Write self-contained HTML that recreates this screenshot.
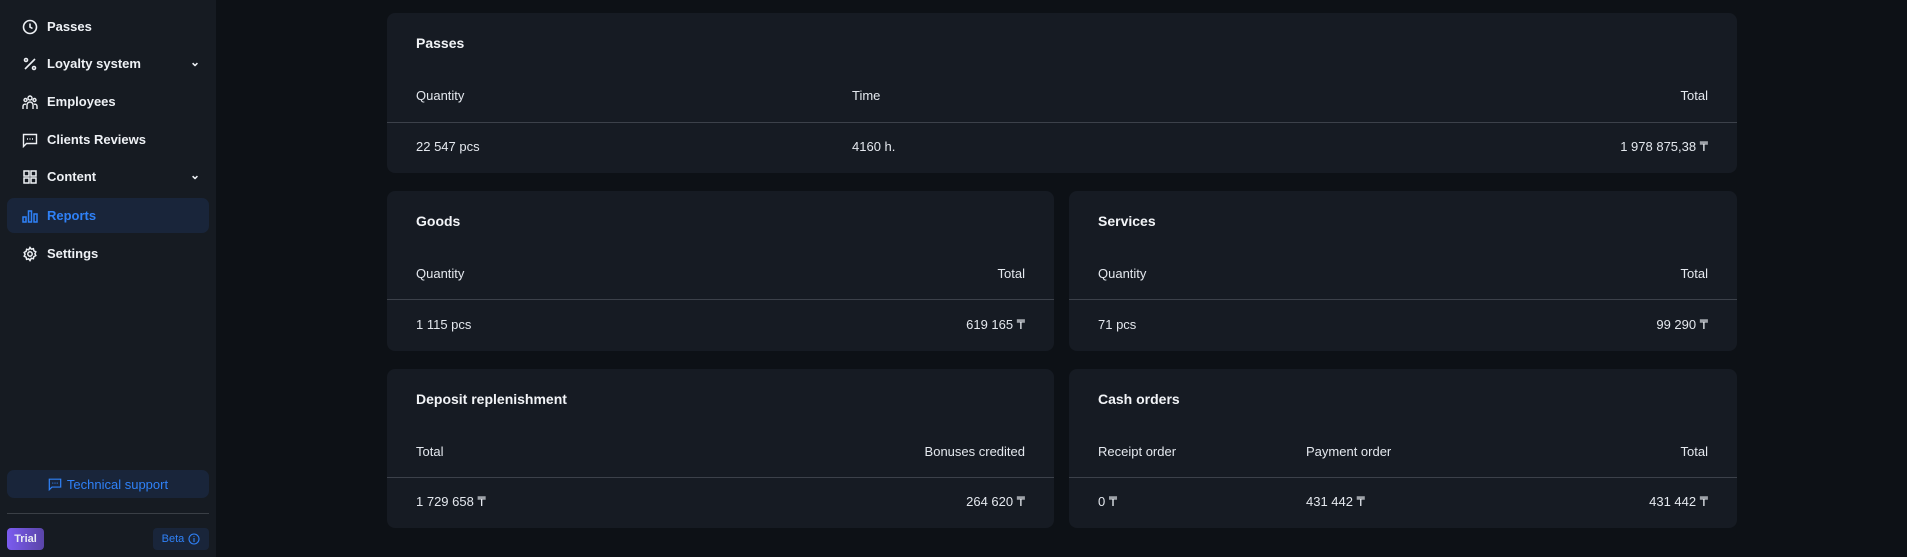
<!DOCTYPE html>
<html><head><meta charset="utf-8"><style>
*{box-sizing:border-box;margin:0;padding:0}
body{width:1907px;height:557px;background:#0d1116;font-family:"Liberation Sans",sans-serif;color:#e9edf2;position:relative;overflow:hidden}
.sb{position:absolute;left:0;top:0;width:216px;height:557px;background:#161b22}
.it{position:absolute;left:7px;width:202px;height:35px;display:flex;align-items:center;font-size:13px;font-weight:bold;color:#eef1f5}
.it svg{position:absolute;left:15px;width:16px;height:16px}
.it span{position:absolute;left:40px}
.it .ch{position:absolute;left:183px;top:9px;font-size:12px}
.act{background:#19253a;border-radius:7px;color:#2f81f7}
.ts{position:absolute;left:7px;top:470px;width:202px;height:28px;background:#19253a;border-radius:7px;color:#2f81f7;font-size:13px;display:flex;align-items:center;justify-content:center;gap:5px}
.hr{position:absolute;left:7px;top:513px;width:202px;height:1px;background:#3a3f46}
.trial{position:absolute;left:7px;top:528px;width:37px;height:22px;border-radius:4px;background:linear-gradient(90deg,#7b5cf0,#5a45a8);font-size:11px;font-weight:bold;display:flex;align-items:center;justify-content:center}
.beta{position:absolute;left:153px;top:528px;width:56px;height:22px;border-radius:4px;background:#19253a;color:#2f81f7;font-size:11px;display:flex;align-items:center;justify-content:center;gap:4px}
.card{position:absolute;background:#161b23;border-radius:8px}
.card h3{position:absolute;left:29px;top:22px;font-size:14px;font-weight:bold;color:#f2f4f7}
.row{position:absolute;left:0;right:0;height:20px;font-size:13px;color:#e4e8ee}
.row div{position:absolute;top:0}
.r{right:29px}
.div{position:absolute;left:0;right:0;height:1px;background:#3c414a}
</style></head><body>
<div class="sb">
<div class="it" style="top:9px"><svg viewBox="0 0 16 16" fill="none" stroke="#eef1f5" stroke-width="1.6"><circle cx="8" cy="8" r="6.5"/><path d="M8 4.5V8l2.5 1.5"/></svg><span>Passes</span></div>
<div class="it" style="top:46px"><svg viewBox="0 0 16 16" fill="none" stroke="#eef1f5" stroke-width="1.6"><path d="M3 13L13 3"/><circle cx="4" cy="4" r="1.5"/><circle cx="12" cy="12" r="1.5"/></svg><span>Loyalty system</span><b class="ch">⌄</b></div>
<div class="it" style="top:84px"><svg viewBox="0 0 16 16" fill="none" stroke="#eef1f5" stroke-width="1.4"><circle cx="8" cy="4" r="2"/><circle cx="3.5" cy="6" r="1.5"/><circle cx="12.5" cy="6" r="1.5"/><path d="M5 15v-4a3 3 0 016 0v4M1 15v-3a2 2 0 013-1.5M15 15v-3a2 2 0 00-3-1.5"/></svg><span>Employees</span></div>
<div class="it" style="top:122px"><svg viewBox="0 0 16 16" fill="none" stroke="#eef1f5" stroke-width="1.4"><path d="M1.5 2.5h13v9h-10l-3 3z"/><path d="M5 7h1M7.5 7h1M10 7h1"/></svg><span>Clients Reviews</span></div>
<div class="it" style="top:159px"><svg viewBox="0 0 16 16" fill="none" stroke="#eef1f5" stroke-width="1.5"><rect x="2" y="2" width="5" height="5"/><rect x="9" y="2" width="5" height="5"/><rect x="2" y="9" width="5" height="5"/><rect x="9" y="9" width="5" height="5"/></svg><span>Content</span><b class="ch">⌄</b></div>
<div class="it act" style="top:198px"><svg viewBox="0 0 16 16" fill="none" stroke="#2f81f7" stroke-width="1.5"><rect x="1" y="9" width="3" height="5"/><rect x="6.5" y="3" width="3" height="11"/><rect x="12" y="6" width="3" height="8"/></svg><span>Reports</span></div>
<div class="it" style="top:236px"><svg viewBox="0 0 16 16" fill="none" stroke="#eef1f5" stroke-width="1.5"><circle cx="8" cy="8" r="2.2"/><path d="M8 1.5l1.3 1.7 2.1-.5.5 2.1 1.9 1-.9 1.9.9 1.9-1.9 1-.5 2.1-2.1-.5L8 14.5l-1.3-1.7-2.1.5-.5-2.1-1.9-1 .9-1.9-.9-1.9 1.9-1 .5-2.1 2.1.5z"/></svg><span>Settings</span></div>
<div class="ts"><svg width="14" height="14" viewBox="0 0 16 16" fill="none" stroke="#2f81f7" stroke-width="1.4"><path d="M1.5 2.5h13v9h-10l-3 3z"/><path d="M5 7h1M7.5 7h1M10 7h1"/></svg>Technical support</div>
<div class="hr"></div>
<div class="trial">Trial</div>
<div class="beta">Beta <svg width="12" height="12" viewBox="0 0 12 12" fill="none" stroke="#2f81f7" stroke-width="1.1"><circle cx="6" cy="6" r="5"/><path d="M6 5v4M6 3v.8"/></svg></div>
</div>

<div class="card" style="left:387px;top:13px;width:1350px;height:160px">
<h3>Passes</h3>
<div class="row" style="top:75px"><div style="left:29px">Quantity</div><div style="left:465px">Time</div><div class="r">Total</div></div>
<div class="div" style="top:109px"></div>
<div class="row" style="top:126px"><div style="left:29px">22 547 pcs</div><div style="left:465px">4160 h.</div><div class="r">1 978 875,38 ₸</div></div>
</div>

<div class="card" style="left:387px;top:191px;width:667px;height:160px">
<h3>Goods</h3>
<div class="row" style="top:75px"><div style="left:29px">Quantity</div><div class="r">Total</div></div>
<div class="div" style="top:108px"></div>
<div class="row" style="top:126px"><div style="left:29px">1 115 pcs</div><div class="r">619 165 ₸</div></div>
</div>

<div class="card" style="left:1069px;top:191px;width:668px;height:160px">
<h3>Services</h3>
<div class="row" style="top:75px"><div style="left:29px">Quantity</div><div class="r">Total</div></div>
<div class="div" style="top:108px"></div>
<div class="row" style="top:126px"><div style="left:29px">71 pcs</div><div class="r">99 290 ₸</div></div>
</div>

<div class="card" style="left:387px;top:369px;width:667px;height:159px">
<h3>Deposit replenishment</h3>
<div class="row" style="top:75px"><div style="left:29px">Total</div><div class="r">Bonuses credited</div></div>
<div class="div" style="top:108px"></div>
<div class="row" style="top:125px"><div style="left:29px">1 729 658 ₸</div><div class="r">264 620 ₸</div></div>
</div>

<div class="card" style="left:1069px;top:369px;width:668px;height:159px">
<h3>Cash orders</h3>
<div class="row" style="top:75px"><div style="left:29px">Receipt order</div><div style="left:237px">Payment order</div><div class="r">Total</div></div>
<div class="div" style="top:108px"></div>
<div class="row" style="top:125px"><div style="left:29px">0 ₸</div><div style="left:237px">431 442 ₸</div><div class="r">431 442 ₸</div></div>
</div>
</body></html>
